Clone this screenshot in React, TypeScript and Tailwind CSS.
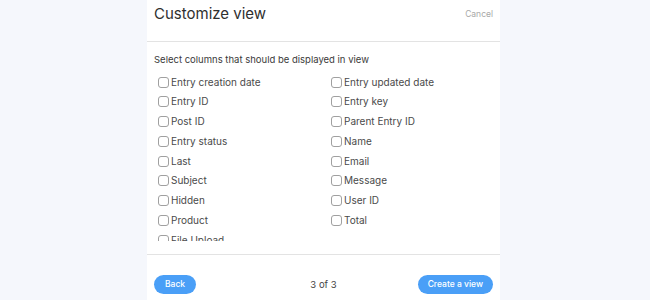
import { useState } from "react";

const LEFT = [
	"Entry creation date",
	"Entry ID",
	"Post ID",
	"Entry status",
	"Last",
	"Subject",
	"Hidden",
	"Product",
	"File Upload",
];

const RIGHT = [
	"Entry updated date",
	"Entry key",
	"Parent Entry ID",
	"Name",
	"Email",
	"Message",
	"User ID",
	"Total",
];

function Check({ label }: { label: string }) {
	const [checked, setChecked] = useState(false);
	return (
		<label className="flex items-center h-[19.75px] cursor-pointer">
			<span
				onClick={() => setChecked(!checked)}
				className={`w-[11px] h-[11px] rounded-[3px] border mr-[2px] ${
					checked ? "bg-[#4a9ff7] border-[#4a9ff7]" : "border-[#a0a0a0] bg-white"
				}`}
			/>
			<span className="text-[10px] text-[#4a4a4a]">{label}</span>
		</label>
	);
}

export default function App() {
	return (
		<div
			className="w-[650px] h-[300px] bg-[#f5f7fc] flex justify-center overflow-hidden"
			style={{ fontFamily: "Inter, 'Noto Sans', sans-serif" }}>
			<div className="w-[353px] bg-white flex flex-col ml-[-3px]">
				<div className="h-[42px] border-b border-[#e3e3e3] flex justify-between px-[7px] pt-[3px]">
					<h2 className="text-[15px] text-[#2f2f2f] leading-[22px]">Customize view</h2>
					<button className="text-[8.5px] text-[#a8a8a8] h-[22px]">Cancel</button>
				</div>

				<div className="h-[199px] overflow-hidden pl-[7px] pt-[11px]">
					<p className="text-[9.5px] text-[#3a3a3a] mb-[5px]">
						Select columns that should be displayed in view
					</p>
					<div className="grid grid-cols-[173px_1fr] pl-[4px]">
						<div className="flex flex-col">
							{LEFT.map((l) => (
								<Check key={l} label={l} />
							))}
						</div>
						<div className="flex flex-col">
							{RIGHT.map((l) => (
								<Check key={l} label={l} />
							))}
						</div>
					</div>
				</div>

				<div className="mt-[13px] border-t border-[#e3e3e3] flex-1 grid grid-cols-3 items-start px-[7px] pt-[20px]">
					<button className="justify-self-start h-[19px] px-[11px] rounded-full bg-[#4a9ff7] text-white text-[8.5px] font-medium">
						Back
					</button>
					<span className="justify-self-center text-[9.5px] text-[#444] leading-[19px]">
						3 of 3
					</span>
					<button className="justify-self-end h-[19px] px-[10px] rounded-full bg-[#4a9ff7] text-white text-[8.5px] font-medium">
						Create a view
					</button>
				</div>
			</div>
		</div>
	);
}
